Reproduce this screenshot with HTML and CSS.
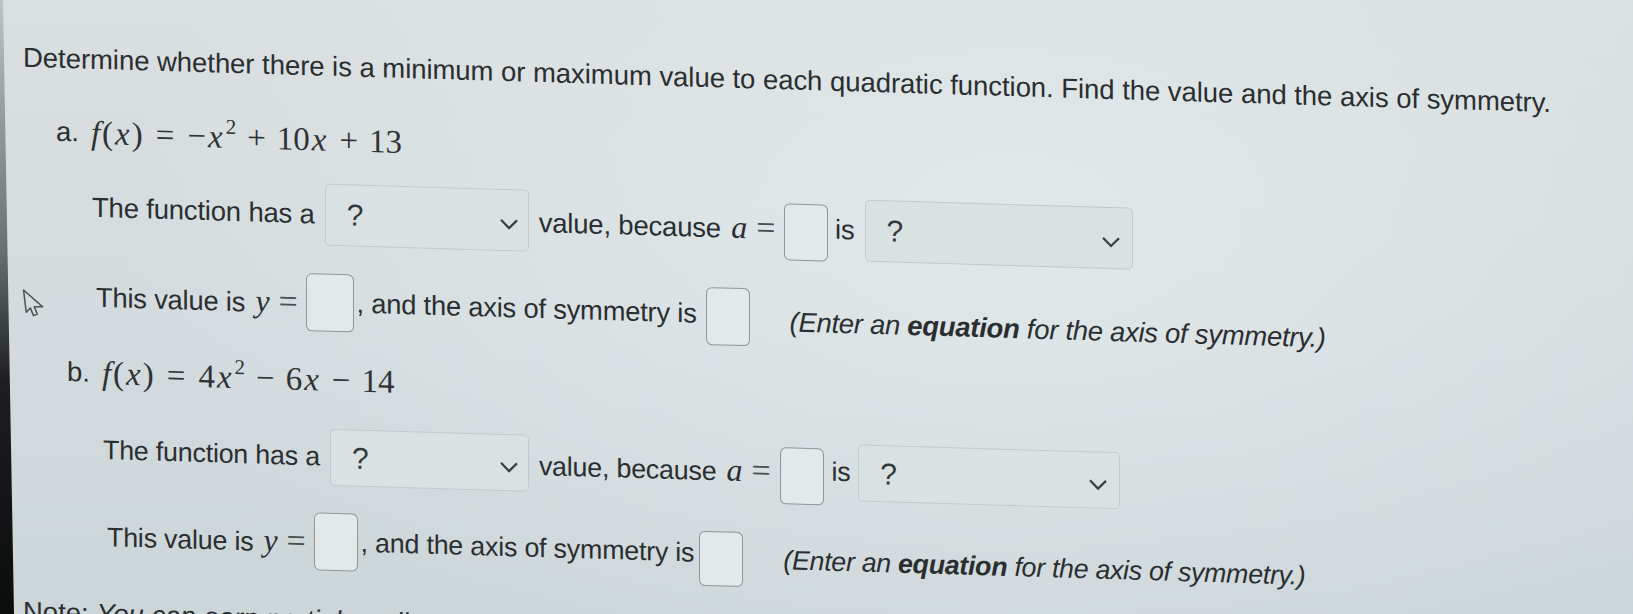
FILE: index.html
```html
<!DOCTYPE html>
<html lang="en">
<head>
<meta charset="utf-8">
<title>Quadratic functions</title>
<link rel="stylesheet" href="styles.css">
</head>
<body>
<div class="bezel"></div>
<svg class="cursor" width="23" height="30" viewBox="0 0 30 38" aria-hidden="true">
  <path d="M2 2 L5.5 31 L11 25.5 L15 35.5 L20 33.5 L16 24 L27 24 Z" fill="none" stroke="#4f5557" stroke-width="2" stroke-linejoin="round"/>
</svg>
<main class="sheet">
  <p class="prompt">Determine whether there is a minimum or maximum value to each quadratic function. Find the value and the axis of symmetry.</p>

  <div class="eq eq-a">
    <span class="item-label">a.</span>
    <span class="math"><i>f</i>(<i>x</i>)<span class="rel">=</span>−<i>x</i><sup>2</sup><span class="bin">+</span>10<i>x</i><span class="bin">+</span>13</span>
  </div>

  <div class="row row-a1">
    <span class="txt">The function has a</span>
    <div class="select sel-short"><span class="q">?</span><svg class="chev" width="20" height="12" viewBox="0 0 20 12"><path d="M2 2 L10 10 L18 2" fill="none" stroke="#3a3f41" stroke-width="2.2"/></svg></div>
    <span class="txt">value, because <span class="mi">a</span><span class="mrel">=</span></span>
    <span class="box box-a"></span>
    <span class="txt">is</span>
    <div class="select sel-long"><span class="q">?</span><svg class="chev" width="20" height="12" viewBox="0 0 20 12"><path d="M2 2 L10 10 L18 2" fill="none" stroke="#3a3f41" stroke-width="2.2"/></svg></div>
  </div>

  <div class="row row-a2">
    <span class="txt">This value is <span class="mi">y</span><span class="mrel">=</span></span>
    <span class="box box-y"></span>
    <span class="txt">, and the axis of symmetry is</span>
    <span class="box box-axis"></span>
    <span class="hint">(Enter an <b>equation</b> for the axis of symmetry.)</span>
  </div>

  <div class="eq eq-b">
    <span class="item-label">b.</span>
    <span class="math"><i>f</i>(<i>x</i>)<span class="rel">=</span>4<i>x</i><sup>2</sup><span class="bin">−</span>6<i>x</i><span class="bin">−</span>14</span>
  </div>

  <div class="row row-b1">
    <span class="txt">The function has a</span>
    <div class="select sel-short"><span class="q">?</span><svg class="chev" width="20" height="12" viewBox="0 0 20 12"><path d="M2 2 L10 10 L18 2" fill="none" stroke="#3a3f41" stroke-width="2.2"/></svg></div>
    <span class="txt">value, because <span class="mi">a</span><span class="mrel">=</span></span>
    <span class="box box-a"></span>
    <span class="txt">is</span>
    <div class="select sel-long"><span class="q">?</span><svg class="chev" width="20" height="12" viewBox="0 0 20 12"><path d="M2 2 L10 10 L18 2" fill="none" stroke="#3a3f41" stroke-width="2.2"/></svg></div>
  </div>

  <div class="row row-b2">
    <span class="txt">This value is <span class="mi">y</span><span class="mrel">=</span></span>
    <span class="box box-y"></span>
    <span class="txt">, and the axis of symmetry is</span>
    <span class="box box-axis"></span>
    <span class="hint">(Enter an <b>equation</b> for the axis of symmetry.)</span>
  </div>

  <p class="note">Note: <em>You can earn partial credit on this problem.</em></p>
</main>
</body>
</html>
```

FILE: styles.css
```css
html, body {
  margin: 0;
  padding: 0;
}

body {
  width: 1633px;
  height: 614px;
  overflow: hidden;
  position: relative;
  background:
    radial-gradient(ellipse 900px 500px at 62% 35%, rgba(226, 233, 235, 0.9) 0%, rgba(226, 233, 235, 0) 100%),
    linear-gradient(180deg, #dadfe0 0%, #d3dbde 55%, #ccd5d8 100%);
  font-family: "Liberation Sans", Arial, sans-serif;
  color: #2a2e30;
}

.bezel {
  position: absolute;
  left: 0;
  top: 0;
  width: 22px;
  height: 614px;
  background: linear-gradient(180deg, rgba(165, 171, 173, 0.55) 0%, rgba(90, 95, 97, 0.85) 40%, #1c1e1f 62%, #0b0c0c 100%);
  clip-path: polygon(0 0, 3px 0, 14px 100%, 0 100%);
}

.cursor {
  position: absolute;
  left: 22px;
  top: 288px;
}

.sheet {
  transform: skewY(1.7deg);
  transform-origin: 0 0;
  padding-top: 41px;
}

.prompt {
  margin: 0;
  padding-left: 23px;
  font-size: 27.5px;
  line-height: 31px;
  white-space: nowrap;
  letter-spacing: -0.05px;
}

.eq {
  display: flex;
  align-items: center;
  height: 40px;
  white-space: nowrap;
}

.eq-a {
  margin-top: 38px;
  padding-left: 56px;
}

.eq-b {
  margin-top: 27px;
  padding-left: 67px;
}

.item-label {
  font-size: 27.5px;
  margin-right: 10px;
}

.math {
  font-family: "Liberation Serif", "Times New Roman", serif;
  font-size: 33px;
  color: #2f3335;
}

.math i {
  font-style: italic;
  margin: 0 2px;
}

.math sup {
  font-size: 21px;
  line-height: 0;
  vertical-align: 14px;
  font-style: normal;
  margin-left: 1px;
}

.rel {
  margin: 0 13px;
}

.bin {
  margin: 0 11px;
}

.row {
  display: flex;
  align-items: center;
  white-space: nowrap;
}

.txt {
  font-size: 27.5px;
  letter-spacing: -0.2px;
}

.mi {
  font-family: "Liberation Serif", "Times New Roman", serif;
  font-style: italic;
  font-size: 32px;
  margin-left: 3px;
}

.mrel {
  font-family: "Liberation Serif", "Times New Roman", serif;
  font-size: 34px;
  margin-left: 9px;
  color: #4a4f51;
}

.row-a1 {
  margin-top: 24px;
  height: 62px;
  padding-left: 92px;
}

.row-a2 {
  margin-top: 27px;
  height: 60px;
  padding-left: 96px;
}

.row-b1 {
  margin-top: 29px;
  height: 57px;
  padding-left: 103px;
}

.row-b2 {
  margin-top: 27px;
  height: 58px;
  padding-left: 107px;
}

.row-a2 .txt {
  font-size: 27.3px;
}

.row-b1 .txt,
.row-b2 .txt,
.row-b2 .hint {
  font-size: 26.8px;
}

.select {
  box-sizing: border-box;
  display: flex;
  align-items: center;
  justify-content: space-between;
  height: 100%;
  margin: 0 10px 0 10px;
  padding: 0 9px 0 21px;
  border: 1px solid #c2cacd;
  border-radius: 5px;
  background: #dae1e3;
}

.sel-short {
  width: 204px;
}

.sel-long {
  width: 268px;
  padding-right: 11px;
}

.row-b1 .select {
  margin-left: 10px;
  margin-right: 10px;
}

.row-b1 .sel-short {
  width: 199px;
}

.row-b1 .sel-long {
  width: 262px;
  margin-left: 8px;
}

.q {
  font-size: 30px;
  color: #33383a;
}

.chev {
  margin-top: 8px;
}

.box {
  box-sizing: border-box;
  display: block;
  width: 44px;
  height: 57px;
  border: 1.5px solid #8e979a;
  border-radius: 6px;
  background: #e3e8e9;
}

.box-a {
  margin: 0 7px 0 9px;
  align-self: flex-end;
  margin-bottom: -1px;
}

.row-b1 .box-a {
  margin-bottom: -5px;
  margin-left: 10px;
}

.box-y {
  width: 48px;
  height: 58px;
  margin: 0 3px 0 8px;
}

.row-b2 .box-y {
  width: 44px;
  margin-left: 8px;
}

.box-axis {
  height: 58px;
  margin: 0 40px 0 9px;
  align-self: flex-end;
  margin-bottom: -1px;
}

.row-b2 .box-axis {
  height: 55px;
  margin-bottom: -4px;
  margin-left: 5px;
}

.hint {
  font-size: 27.5px;
  font-style: italic;
  letter-spacing: -0.3px;
  margin-top: 12px;
}

.row-b2 .hint {
  margin-top: 10px;
}

.hint b {
  font-weight: bold;
}

.note {
  margin: 34px 0 0;
  padding-left: 23px;
  font-size: 27.5px;
  line-height: 31px;
  white-space: nowrap;
}

.note em {
  font-style: italic;
}
```
